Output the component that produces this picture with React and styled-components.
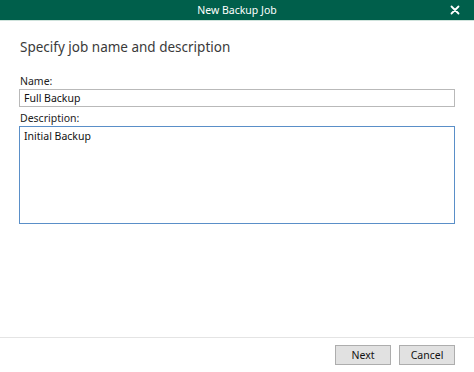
import React from "react";
import styled, { createGlobalStyle } from "styled-components";

const Global = createGlobalStyle`
  html, body { margin: 0; padding: 0; background: #fff; }
  body { font-family: "Noto Sans", "Open Sans", sans-serif; }
  * { box-sizing: border-box; }
`;

const Window = styled.div`
  width: 474px;
  height: 372px;
  display: flex;
  flex-direction: column;
  background: #fff;
`;

const TitleBar = styled.div`
  height: 21px;
  background: #005f4b;
  border-bottom: 1px solid #cfe3dc;
  display: flex;
  align-items: center;
  justify-content: center;
  position: relative;
  color: #fff;
  font-size: 10.5px;
`;

const Close = styled.div`
  position: absolute;
  right: 14px;
  top: 5px;
  width: 10px;
  height: 10px;
  display: flex;
`;

const Body = styled.div`
  flex: 1;
  padding: 17px 19px 0 19px;
  display: flex;
  flex-direction: column;
`;

const Heading = styled.div`
  font-size: 13.5px;
  color: #3a3a3a;
  line-height: 18px;
  padding-left: 1px;
  margin-bottom: 18px;
`;

const Label = styled.div`
  font-size: 10.5px;
  color: #222;
  line-height: 14px;
  padding-left: 1px;
  margin-bottom: 1px;
`;

const Input = styled.div`
  height: 18px;
  border: 1px solid #b9b9b9;
  font-size: 10.5px;
  color: #111;
  padding: 0 4px;
  display: flex;
  align-items: center;
  margin-bottom: 4px;
`;

const TextArea = styled.div`
  height: 98px;
  border: 1px solid #5a8fc8;
  font-size: 10.5px;
  color: #111;
  padding: 2px 4px;
  line-height: 14px;
`;

const Footer = styled.div`
  height: 35px;
  border-top: 1px solid #e4e4e4;
  display: flex;
  justify-content: flex-end;
  align-items: flex-start;
  gap: 8px;
  padding: 7px 19px 0 0;
`;

const Button = styled.div`
  width: 56px;
  height: 20px;
  background: #e1e1e1;
  border: 1px solid #adadad;
  font-size: 10.5px;
  color: #111;
  display: flex;
  align-items: center;
  justify-content: center;
`;

export default function App() {
  return (
    <>
      <Global />
      <Window>
        <TitleBar>
          New Backup Job
          <Close>
            <svg width="10" height="10" viewBox="0 0 10 10">
              <path d="M1.5 1.5 L8.5 8.5 M8.5 1.5 L1.5 8.5" stroke="#fff" strokeWidth="1.8" strokeLinecap="round" />
            </svg>
          </Close>
        </TitleBar>
        <Body>
          <Heading>Specify job name and description</Heading>
          <Label>Name:</Label>
          <Input>Full Backup</Input>
          <Label>Description:</Label>
          <TextArea>Initial Backup</TextArea>
        </Body>
        <Footer>
          <Button>Next</Button>
          <Button>Cancel</Button>
        </Footer>
      </Window>
    </>
  );
}
